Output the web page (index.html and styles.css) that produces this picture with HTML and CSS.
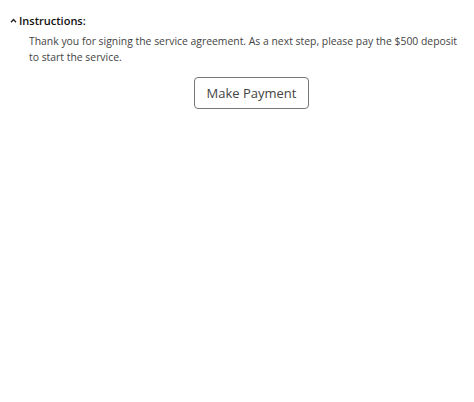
FILE: index.html
```html
<!DOCTYPE html>
<html lang="en">
<head>
  <meta charset="UTF-8">
  <title>Instructions</title>
  <link rel="stylesheet" href="styles.css">
</head>
<body>
  <div class="section">
    <div class="section-header">
      <svg class="chevron" width="7" height="5" viewBox="0 0 7 5"><path d="M1 4.2 L3.5 1.5 L6 4.2" fill="none" stroke="#222" stroke-width="1.3"/></svg>
      <span class="title">Instructions:</span>
    </div>
    <div class="section-body">
      <p class="text">Thank you for signing the service agreement. As a next step, please pay the $500 deposit to start the service.</p>
      <div class="actions">
        <button class="pay-btn">Make Payment</button>
      </div>
    </div>
  </div>
</body>
</html>
```

FILE: styles.css
```css
body {
  margin: 0;
  font-family: "Open Sans", sans-serif;
  color: #333;
  background: #fff;
}

.section {
  padding: 13px 0 0 10px;
}

.section-header {
  display: flex;
  align-items: center;
  gap: 2px;
}

.title {
  font-size: 11px;
  font-weight: 600;
  color: #111;
}

.section-body {
  padding: 6px 0 0 19px;
}

.text {
  margin: 0 12px 0 0;
  font-size: 10.4px;
  line-height: 15.5px;
  color: #444;
}

.actions {
  display: flex;
  justify-content: center;
  padding-top: 12px;
}

.pay-btn {
  font-family: "Open Sans", sans-serif;
  font-size: 13px;
  color: #444;
  background: #fff;
  border: 1px solid #777;
  border-radius: 4px;
  padding: 6px 12px;
}
```
